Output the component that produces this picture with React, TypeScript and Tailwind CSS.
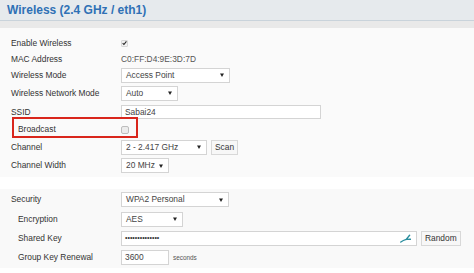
import React from "react";

const font = { fontFamily: '"Liberation Sans", Arial, sans-serif' };

const Arrow: React.FC = () => (
  <svg width="4" height="4" viewBox="0 0 4 4" className="shrink-0">
    <path d="M0 0.5 L4 0.5 L2 4 Z" fill="#222" />
  </svg>
);

const Select: React.FC<{ value: string; width: string }> = ({ value, width }) => (
  <div
    className={`flex h-[15px] items-center justify-between border border-[#d4d4d4] bg-white pl-[4px] pr-[5px] text-[8.4px] text-[#444] ${width}`}
  >
    <span>{value}</span>
    <Arrow />
  </div>
);

const Button: React.FC<{ children: React.ReactNode }> = ({ children }) => (
  <div className="flex h-[15px] items-center border border-[#d8d8d8] bg-[#f7f7f7] px-[3px] text-[8.4px] text-[#333]">
    {children}
  </div>
);

const Row: React.FC<{
  label: string;
  indent?: boolean;
  h: string;
  children?: React.ReactNode;
}> = ({ label, indent, h, children }) => (
  <div className={`flex items-center ${h}`}>
    <div className={`w-[121px] shrink-0 text-[8.4px] text-[#333] ${indent ? "pl-[18px]" : "pl-[11px]"}`}>
      {label}
    </div>
    <div className="flex items-center gap-[4px]">{children}</div>
  </div>
);

// little teal wrench shown inside the shared key box
const Wrench: React.FC = () => (
  <svg width="11" height="9" viewBox="0 0 11 9" className="absolute right-[5px] top-[2px]">
    <path
      d="M0.8 8 C2.5 6.8 4.2 6 6.2 5.4 L10.4 5.2 M6.2 5.4 L9.6 1.2"
      stroke="#2a8e9e"
      strokeWidth="1.4"
      fill="none"
      strokeLinecap="round"
    />
  </svg>
);

export default function App() {
  return (
    <div className="h-[273px] w-[474px] overflow-hidden bg-white" style={font}>
      <div className="flex h-[21px] items-center border-b border-[#c9d3db] bg-[#e6eaed] pl-[7px]">
        <h1 className="text-[12px] font-bold text-[#2f71b5]">Wireless (2.4 GHz / eth1)</h1>
      </div>
      <div className="h-[7px] bg-[#e9e9e9]" />

      <div className="bg-[#fafafa] pb-[2px] pt-[7px]">
        <Row label="Enable Wireless" h="h-[16px]">
          <div className="flex h-[7px] w-[7px] items-center justify-center rounded-[1px] border border-[#d8d8d8] bg-[#f2f2f2]">
            <svg width="6" height="6" viewBox="0 0 6 6">
              <path d="M0.8 3.2 L2.3 4.8 L5.3 1" stroke="#222" strokeWidth="1.3" fill="none" />
            </svg>
          </div>
        </Row>
        <Row label="MAC Address" h="h-[16px]">
          <span className="text-[8.4px] text-[#555]">C0:FF:D4:9E:3D:7D</span>
        </Row>
        <Row label="Wireless Mode" h="h-[16px]">
          <Select value="Access Point" width="w-[109px]" />
        </Row>
        <Row label="Wireless Network Mode" h="h-[20px]">
          <Select value="Auto" width="w-[57px]" />
        </Row>
        <Row label="SSID" h="h-[18px]">
          <div className="flex h-[14px] w-[200px] items-center border border-[#d4d4d4] bg-white pl-[3px] text-[8.4px] text-[#444]">
            Sabai24
          </div>
        </Row>
        <div className="relative">
          <Row label="Broadcast" indent h="h-[17px]">
            <div className="h-[8px] w-[8px] rounded-[2px] border border-[#bdbdbd] bg-[#ececec]" />
          </Row>
          <div className="absolute left-[12px] top-[-4px] h-[21px] w-[126px] border-2 border-[#d9261c]" />
        </div>
        <Row label="Channel" h="h-[18px]">
          <Select value="2 - 2.417 GHz" width="w-[86px]" />
          <Button>Scan</Button>
        </Row>
        <Row label="Channel Width" h="h-[19px]">
          <Select value="20 MHz" width="w-[48px]" />
        </Row>
      </div>

      <div className="h-[12px] bg-white" />

      <div className="bg-[#f9f9f9] pb-[1px] pt-[1px]">
        <Row label="Security" h="h-[19px]">
          <Select value="WPA2 Personal" width="w-[108px]" />
        </Row>
        <Row label="Encryption" indent h="h-[20px]">
          <Select value="AES" width="w-[62px]" />
        </Row>
        <Row label="Shared Key" indent h="h-[19px]">
          <div className="relative flex h-[15px] w-[296px] items-center border border-[#d4d4d4] bg-white pl-[3px] text-[7px] text-[#333]">
            ••••••••••••••
            <Wrench />
          </div>
          <Button>Random</Button>
        </Row>
        <Row label="Group Key Renewal" indent h="h-[19px]">
          <div className="flex h-[15px] w-[48px] items-center border border-[#d4d4d4] bg-white pl-[3px] text-[8.4px] text-[#444]">
            3600
          </div>
          <span className="text-[6.4px] text-[#555]">seconds</span>
        </Row>
      </div>
    </div>
  );
}
